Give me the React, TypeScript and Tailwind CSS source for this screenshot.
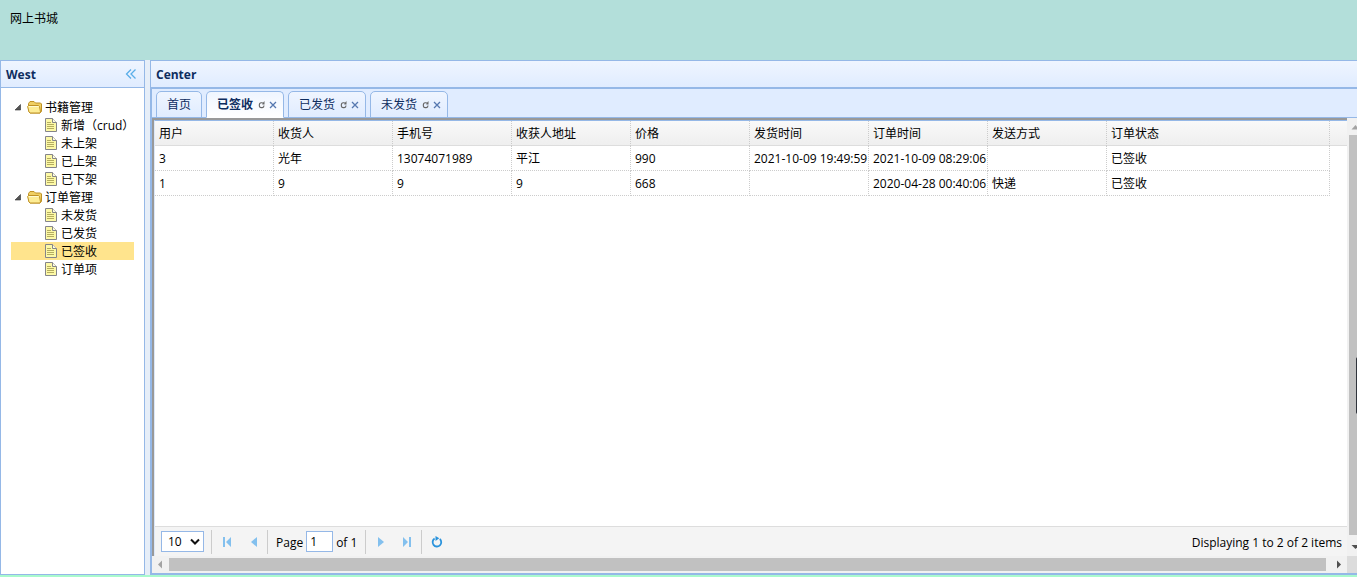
import React from 'react';

type TreeGroup = { label: string; items: string[] };

const groups: TreeGroup[] = [
  { label: '书籍管理', items: ['新增（crud）', '未上架', '已上架', '已下架'] },
  { label: '订单管理', items: ['未发货', '已发货', '已签收', '订单项'] },
];

const tabs = [
  { label: '首页', closable: false },
  { label: '已签收', closable: true },
  { label: '已发货', closable: true },
  { label: '未发货', closable: true },
];

const columns = ['用户', '收货人', '手机号', '收获人地址', '价格', '发货时间', '订单时间', '发送方式', '订单状态'];

const rows = [
  ['3', '光年', '13074071989', '平江', '990', '2021-10-09 19:49:59', '2021-10-09 08:29:06', '', '已签收'],
  ['1', '9', '9', '9', '668', '', '2020-04-28 00:40:06', '快递', '已签收'],
];

function FolderIcon() {
  return (
    <svg width="16" height="18" viewBox="0 0 16 18" className="shrink-0" aria-hidden="true">
      <path d="M1.500 12.500V5.500L3 3.500h4l1.500 1.500h5l1 1v7.500l-1.500 1.500H3z" fill="#f0cf62" stroke="#bf9226" />
      <path d="M.6 8.500 1.500 7.500h10l1 1 1 5.500-.5 1H3L2 14z" fill="#fdec94" stroke="#bf9226" />
      <path d="M2 8.500h9.500" stroke="#fffad0" />
    </svg>
  );
}

function FileIcon() {
  return (
    <svg width="16" height="18" viewBox="0 0 16 18" className="shrink-0" aria-hidden="true">
      <path d="M2.500 2.500h7l4 4v9h-11z" fill="#fdf9a6" stroke="#85858a" />
      <path d="M9.500 2.500v4h4" fill="#fffde0" stroke="#85858a" />
      <path d="M4 6.500h4M4 8.500h7M4 10.500h7M4 12.500h7" stroke="#b5ad60" />
    </svg>
  );
}

function Expander() {
  return (
    <svg width="16" height="18" viewBox="0 0 16 18" className="shrink-0" aria-hidden="true">
      <path d="M9.500 6.500V12h-5.500z" fill="#555" stroke="#333" strokeWidth=".6" />
    </svg>
  );
}

function ReloadMini() {
  return (
    <svg width="8" height="8" viewBox="0 0 8 8" aria-hidden="true">
      <path d="M4.800 1.800H3.200Q1.300 1.800 1.300 4.200T3.300 6.600h1Q6 6.600 6 4.600" fill="none" stroke="#666" strokeWidth="1.100" />
      <path d="M6.500 0v3.600H4.300V2.500z" fill="#666" />
    </svg>
  );
}

function CloseMini() {
  return (
    <svg width="8" height="8" viewBox="0 0 8 8" aria-hidden="true">
      <path d="M1 1l6 6M7 1 1 7" stroke="#5678b0" strokeWidth="1.300" />
    </svg>
  );
}

function Separator() {
  return <div className="h-6 w-px shrink-0 bg-[#ccc]" />;
}

function PagerButton({ label, path }: { label: string; path: string }) {
  return (
    <button type="button" aria-label={label} className="flex h-6 w-[26px] shrink-0 items-center justify-center">
      <svg width="12" height="12" viewBox="0 0 12 12" aria-hidden="true">
        <path d={path} fill="#83c0ee" />
      </svg>
    </button>
  );
}

function West() {
  return (
    <aside className="flex w-[145px] shrink-0 flex-col border border-[#95b8e7] bg-white">
      <div className="flex h-[27px] shrink-0 items-center justify-between border-b border-[#95b8e7] bg-linear-to-b from-[#eff5ff] to-[#e0ecff] px-[5px]">
        <h2 className="pt-[2px] font-bold text-[#0e2d5f]">West</h2>
        <button type="button" aria-label="Collapse" className="flex size-4 items-center justify-center">
          <svg width="12" height="12" viewBox="0 0 12 12" aria-hidden="true">
            <path d="M6 1.500 1.500 6 6 10.500M10.500 1.500 6 6l4.500 4.500" fill="none" stroke="#5aaee8" strokeWidth="1.300" />
          </svg>
        </button>
      </div>
      <ul className="p-[10px]">
        {groups.map((g) => (
          <li key={g.label}>
            <div className="flex h-[18px] items-center whitespace-nowrap">
              <Expander />
              <FolderIcon />
              <span className="pt-[2px] pl-[2px]">{g.label}</span>
            </div>
            <ul>
              {g.items.map((item) => (
                <li
                  key={item}
                  className={`flex h-[18px] items-center whitespace-nowrap pl-8 ${item === '已签收' ? 'bg-[#ffe48d]' : ''}`}
                >
                  <FileIcon />
                  <span className="pt-[2px] pl-[2px]">{item}</span>
                </li>
              ))}
            </ul>
          </li>
        ))}
      </ul>
    </aside>
  );
}

function TabBar() {
  return (
    <div role="tablist" className="flex h-[29px] shrink-0 items-end gap-1 border-b border-[#95b8e7] bg-[#e0ecff] pl-1">
      {tabs.map((t, i) => {
        const active = i === 1;
        return (
          <div
            key={t.label}
            className={`-mb-px flex h-[27px] items-center rounded-t-[5px] border border-[#95b8e7] pl-[10px] text-[#0e2d5f] ${
              t.closable ? 'w-[78px]' : 'w-[46px]'
            } ${active ? 'border-b-white bg-linear-to-b from-[#eff5ff] to-white font-bold' : 'bg-linear-to-b from-[#eff5ff] to-[#e0ecff]'}`}
          >
            <button type="button" role="tab" aria-selected={active} className="whitespace-nowrap">
              {t.label}
            </button>
            {t.closable && (
              <span className="flex gap-[3px] pl-[5px]">
                <button type="button" aria-label={`刷新 ${t.label}`}><ReloadMini /></button>
                <button type="button" aria-label={`关闭 ${t.label}`}><CloseMini /></button>
              </span>
            )}
          </div>
        );
      })}
    </div>
  );
}

function Grid() {
  return (
    <div className="min-h-0 flex-1 overflow-hidden bg-white">
      <div className="bg-[linear-gradient(to_bottom,#f9f9f9,#efefef_24px,#ddd_24px,#ddd_25px,transparent_25px)]">
        <table className="w-[calc(100%-17px)] table-fixed border-separate border-spacing-0">
          <colgroup>
            {columns.map((c, i) => (
              <col key={c} className={i < 8 ? 'w-[119px]' : ''} />
            ))}
          </colgroup>
          <thead>
            <tr>
              {columns.map((c) => (
                <th key={c} scope="col" className="h-[25px] overflow-hidden border-r border-dotted border-[#ccc] px-1 pt-px pb-0 text-left font-normal whitespace-nowrap">
                  {c}
                </th>
              ))}
            </tr>
          </thead>
          <tbody>
            {rows.map((r) => (
              <tr key={r[0]}>
                {r.map((v, i) => (
                  <td key={columns[i]} className="h-[25px] overflow-hidden border-r border-b border-dotted border-[#ccc] px-1 pt-[2px] pb-0 text-clip whitespace-nowrap">
                    {v}
                  </td>
                ))}
              </tr>
            ))}
          </tbody>
        </table>
      </div>
    </div>
  );
}

function Pager() {
  return (
    <div className="flex h-[30px] shrink-0 items-center border-t border-[#ddd] bg-[#f4f4f4] pr-[5px] pl-[6px]">
      <div className="relative mr-[7px]">
        <select aria-label="Page size" defaultValue="10" className="block h-[21px] w-[43px] appearance-none border border-[#95b8e7] bg-white pt-px pl-[6px] text-[12px] leading-[18px]">
          <option>10</option>
          <option>20</option>
          <option>50</option>
        </select>
        <svg width="12" height="8" viewBox="0 0 12 8" className="pointer-events-none absolute top-[7px] right-[3px]" aria-hidden="true">
          <path d="M2 1.500l4 4 4-4" fill="none" stroke="#111" strokeWidth="2" />
        </svg>
      </div>
      <Separator />
      <div className="flex pl-[3px]">
        <PagerButton label="First page" path="M1 1h2v10H1zM9 1v10L4 6z" />
        <PagerButton label="Previous page" path="M9 1v10L3 6z" />
      </div>
      <Separator />
      <label className="flex items-center gap-[3px] pl-2">
        <span className="pt-[2px]">Page</span>
        <input type="text" defaultValue="1" className="h-[21px] w-[27px] border border-[#95b8e7] bg-white px-[3px] text-[12px]" />
      </label>
      <span className="w-8 pt-[2px] pl-[3px] whitespace-nowrap">of 1</span>
      <Separator />
      <div className="flex pr-px pl-[2px]">
        <PagerButton label="Next page" path="M3 1v10l6-5z" />
        <PagerButton label="Last page" path="M2 1v10l5-5zM8 1h2v10H8z" />
      </div>
      <Separator />
      <button type="button" aria-label="Reload" className="ml-[2px] flex h-6 w-[26px] items-center justify-center">
        <svg width="12" height="12" viewBox="0 0 12 12" aria-hidden="true">
          <path d="M3.600 2.600A4.300 4.300 0 1 0 8.800 3" fill="none" stroke="#2a93dc" strokeWidth="1.800" />
          <path d="M4.500 0v5L8.300 2.200z" fill="#2a93dc" />
        </svg>
      </button>
      <span className="ml-auto pt-[2px] whitespace-nowrap">Displaying 1 to 2 of 2 items</span>
    </div>
  );
}

function VerticalScrollbar() {
  return (
    <div className="w-[10px] shrink-0 overflow-hidden" aria-hidden="true">
      <div className="flex h-full w-[17px] flex-col items-center bg-[#f1f1f1]">
        <svg width="17" height="17" viewBox="0 0 17 17" className="shrink-0">
          <path d="M4.500 11.500h8l-4-4.500z" fill="#a3a3a3" />
        </svg>
        <div className="w-[13px] flex-1 bg-[#c1c1c1]" />
        <svg width="17" height="21" viewBox="0 0 17 21" className="shrink-0">
          <path d="M4.500 10h8l-4 4z" fill="#505050" />
        </svg>
        <div className="h-[17px] w-full shrink-0 bg-[#dcdcdc]" />
      </div>
    </div>
  );
}

function HorizontalScrollbar() {
  return (
    <div className="flex h-[17px] shrink-0 items-center bg-[#f1f1f1]" aria-hidden="true">
      <svg width="17" height="17" viewBox="0 0 17 17" className="shrink-0">
        <path d="M10 4.500v8l-4-4z" fill="#a3a3a3" />
      </svg>
      <div className="h-[13px] flex-1 bg-[#c1c1c1]" />
      <svg width="21" height="17" viewBox="0 0 21 17" className="shrink-0">
        <path d="M11 4.500v8l4-4z" fill="#505050" />
      </svg>
    </div>
  );
}

function Center() {
  return (
    <main className="flex min-w-0 flex-1 flex-col border-t border-b-2 border-l border-[#95b8e7] bg-white">
      <div className="flex h-7 shrink-0 items-center border-b-2 border-[#95b8e7] bg-linear-to-b from-[#eff5ff] to-[#e0ecff] pl-[5px]">
        <h2 className="pt-[2px] font-bold text-[#0e2d5f]">Center</h2>
      </div>
      <div className="flex min-h-0 flex-1 flex-col border-l border-[#95b8e7]">
        <TabBar />
        <div className="flex min-h-0 flex-1">
          <div className="flex min-w-0 flex-1 flex-col">
            <div className="flex min-h-0 flex-1 flex-col border-t-2 border-l-2 border-[#999]">
              <div className="flex min-h-0 flex-1 flex-col border-t border-l border-t-[#95b8e7] border-l-[#dbe8fa]">
                <Grid />
                <Pager />
              </div>
            </div>
            <HorizontalScrollbar />
          </div>
          <VerticalScrollbar />
        </div>
      </div>
    </main>
  );
}

export default function App() {
  return (
    <div className="relative flex h-screen flex-col overflow-hidden bg-[#e6eef8] font-['Open_Sans','Noto_Sans_CJK_SC',sans-serif] text-[12px] leading-[18px] text-black">
      <header className="h-[60px] shrink-0 bg-[#b3dfda] p-[10px]">网上书城</header>
      <div className="flex min-h-0 flex-1 gap-[5px]">
        <West />
        <Center />
      </div>
      <footer className="h-[2px] shrink-0 bg-[#a9facd]" />
      <div className="absolute top-[357px] -right-[3px] h-[57px] w-1 rounded-[2px] bg-[#30343c]" />
    </div>
  );
}
